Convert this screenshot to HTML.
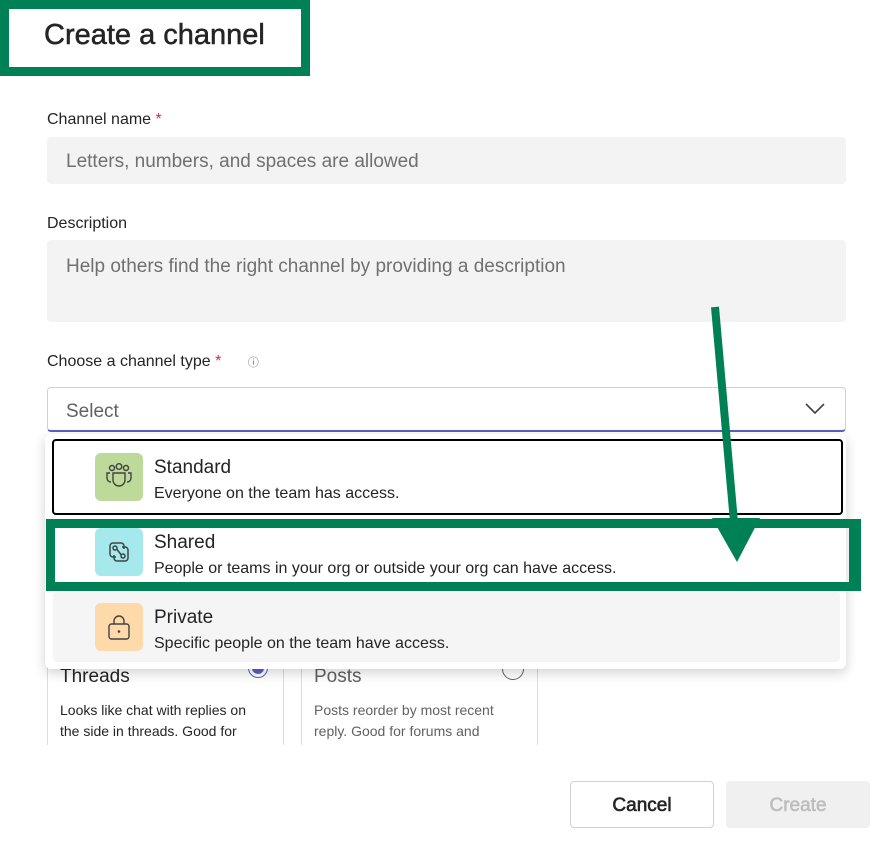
<!DOCTYPE html>
<html><head><meta charset="utf-8"><style>
body{margin:0;width:885px;height:845px;background:#fff;font-family:"Liberation Sans",sans-serif;position:relative;overflow:hidden;color:#242424}
.a{position:absolute}
.lbl{font-size:16px;color:#242424}
.inp{background:#f3f3f3;border-radius:4px;color:#707070;font-size:19px}
.ico{width:48px;height:48px;border-radius:6px}
.t{font-size:19px;color:#242424}
.s{font-size:16px;color:#242424}
</style></head><body>
<div class="a" style="left:0;top:0;width:292px;height:58px;border:9px solid #008055"></div>
<div class="a" style="left:44px;top:19px;font-size:29px;color:#242424;-webkit-text-stroke:0.5px #242424">Create a channel</div>

<div class="a lbl" style="left:47px;top:111px">Channel name <span style="color:#c4314b">*</span></div>
<div class="a inp" style="left:47px;top:137px;width:799px;height:47px"><span class="a" style="left:19px;top:14px">Letters, numbers, and spaces are allowed</span></div>
<div class="a lbl" style="left:47px;top:215px">Description</div>
<div class="a inp" style="left:47px;top:240px;width:799px;height:82px"><span class="a" style="left:19px;top:16px">Help others find the right channel by providing a description</span></div>
<div class="a lbl" style="left:47px;top:353px">Choose a channel type <span style="color:#c4314b">*</span> <span style="font-size:11px;color:#666;margin-left:22px">ⓘ</span></div>
<div class="a" style="left:47px;top:387px;width:797px;height:42px;border:1px solid #d1d1d1;border-bottom:2px solid #5b5fc7;border-radius:4px;background:#fff"><span class="a" style="left:18px;top:13px;font-size:19px;color:#616161">Select</span>
<svg class="a" style="left:757px;top:15px" width="20" height="12"><path d="M1 1l9 9 9-9" stroke="#424242" stroke-width="1.6" fill="none"/></svg></div>

<div class="a" style="left:47px;top:640px;width:235px;height:105px;border-left:1px solid #ddd;border-right:1px solid #ddd"></div>
<div class="a" style="left:301px;top:640px;width:235px;height:105px;border-left:1px solid #ddd;border-right:1px solid #ddd"></div>
<div class="a t" style="left:60px;top:666px">Threads</div>
<div class="a" style="left:248px;top:658px;width:20px;height:20px;border-radius:50%;border:1px solid #5b5fc7;box-sizing:border-box"><div style="margin:3px;width:12px;height:12px;border-radius:50%;background:#5b5fc7"></div></div>
<div class="a" style="left:60px;top:700px;font-size:14px;line-height:21px">Looks like chat with replies on<br>the side in threads. Good for</div>
<div class="a t" style="left:314px;top:666px;color:#616161">Posts</div>
<div class="a" style="left:502px;top:658px;width:22px;height:22px;border-radius:50%;border:1px solid #616161;box-sizing:border-box"></div>
<div class="a" style="left:314px;top:700px;font-size:14px;line-height:21px;color:#616161">Posts reorder by most recent<br>reply. Good for forums and</div>

<div class="a" style="left:45px;top:434px;width:801px;height:235px;background:#fff;border-radius:6px;box-shadow:0 4px 12px rgba(0,0,0,.18)"></div>
<div class="a" style="left:52px;top:439px;width:787px;height:72px;border:2px solid #000;border-radius:4px"></div>
<div class="a ico" style="left:95px;top:453px;background:#bdda9b"><svg width="48" height="48"><g stroke="#424242" stroke-width="1.4" fill="none"><circle cx="17" cy="15" r="2.5"/><circle cx="24" cy="13.5" r="2.8"/><circle cx="31" cy="15" r="2.5"/><path d="M18 20h12v7a6 6 0 0 1-12 0z"/><path d="M15 20h-3v5a4 4 0 0 0 4 4M33 20h3v5a4 4 0 0 1-4 4"/></g></svg></div>
<div class="a t" style="left:154px;top:457px">Standard</div>
<div class="a s" style="left:154px;top:485px">Everyone on the team has access.</div>

<div class="a" style="left:46px;top:519px;width:794px;height:54px;border:9px solid #008055;border-right-width:12px"></div>
<div class="a ico" style="left:95px;top:528px;background:#a6e9ed"><svg width="48" height="48"><g stroke="#424242" stroke-width="1.5" fill="none"><path d="M21 29h-3a3 3 0 0 1-3-3v-8a3 3 0 0 1 3-3h8a3 3 0 0 1 3 3v3"/><path d="M27 19h3a3 3 0 0 1 3 3v8a3 3 0 0 1-3 3h-8a3 3 0 0 1-3-3v-3"/><circle cx="20" cy="20" r="2"/><circle cx="28" cy="28" r="2"/><path d="M22 21.5l4 5"/></g></svg></div>
<div class="a t" style="left:154px;top:532px">Shared</div>
<div class="a s" style="left:154px;top:560px">People or teams in your org or outside your org can have access.</div>

<div class="a" style="left:53px;top:592px;width:787px;height:70px;background:#f5f5f5;border-radius:4px"></div>
<div class="a ico" style="left:95px;top:603px;background:#fed9a9"><svg width="48" height="48"><g stroke="#424242" stroke-width="1.4" fill="none"><path d="M19 21v-3a5 5 0 0 1 10 0v3"/><rect x="14" y="21" width="20" height="15" rx="2.5"/></g><circle cx="24" cy="28.5" r="1.3" fill="#424242"/></svg></div>
<div class="a t" style="left:154px;top:607px">Private</div>
<div class="a s" style="left:154px;top:635px">Specific people on the team have access.</div>

<svg class="a" style="left:0;top:0" width="885" height="845"><line x1="715" y1="307" x2="734" y2="522" stroke="#008055" stroke-width="8"/><path d="M712 518L760 518L737 562Z" fill="#008055"/></svg>

<div class="a" style="left:570px;top:781px;width:142px;height:45px;border:1px solid #d1d1d1;border-radius:4px;text-align:center;line-height:47px;font-size:19px;color:#242424;-webkit-text-stroke:0.6px #242424">Cancel</div>
<div class="a" style="left:726px;top:781px;width:144px;height:47px;background:#f0f0f0;border-radius:4px;text-align:center;line-height:49px;font-size:19px;color:#bdbdbd;-webkit-text-stroke:0.6px #bdbdbd">Create</div>
</body></html>
